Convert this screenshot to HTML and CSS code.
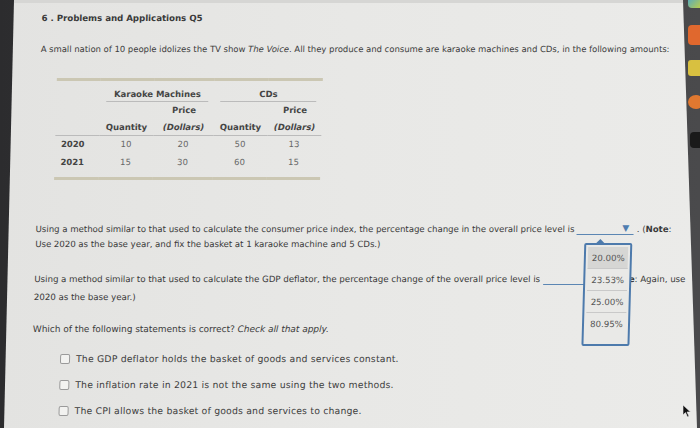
FILE: index.html
```html
<!DOCTYPE html>
<html>
<head>
<meta charset="utf-8">
<link rel="stylesheet" href="styles.css">
</head>
<body>
<div class="screen">
  <div class="page">
    <div class="content">
      <h1 class="title">6 . Problems and Applications Q5</h1>
      <p class="intro">A small nation of 10 people idolizes the TV show <i>The Voice</i>. All they produce and consume are karaoke machines and CDs, in the following amounts:</p>

      <table class="data">
        <thead>
          <tr class="grp">
            <th class="yr"></th>
            <th colspan="2"><span class="gl">Karaoke Machines</span></th>
            <th colspan="2"><span class="gl">CDs</span></th>
          </tr>
          <tr class="sub">
            <th class="yr"></th><th></th><th>Price</th><th></th><th>Price</th>
          </tr>
          <tr class="sub2">
            <th class="yr"></th><th>Quantity</th><th><i>(Dollars)</i></th><th>Quantity</th><th><i>(Dollars)</i></th>
          </tr>
        </thead>
        <tbody>
          <tr><th class="yr">2020</th><td>10</td><td>20</td><td>50</td><td>13</td></tr>
          <tr class="last"><th class="yr">2021</th><td>15</td><td>30</td><td>60</td><td>15</td></tr>
        </tbody>
      </table>

      <p class="q q1">Using a method similar to that used to calculate the consumer price index, the percentage change in the overall price level is <span class="blank b1"><span class="arrow">&#9660;</span><span class="menu"><span class="item sel">20.00%</span><span class="item">23.53%</span><span class="item">25.00%</span><span class="item">80.95%</span></span></span> . (<b>Note</b>: Use 2020 as the base year, and fix the basket at 1 karaoke machine and 5 CDs.)</p>

      <p class="q q2">Using a method similar to that used to calculate the GDP deflator, the percentage change of the overall price level is <span class="blank b2"><span class="arrow">&#9660;</span></span> . (<b>Note</b>: Again, use 2020 as the base year.)</p>

      <p class="q q3">Which of the following statements is correct? <i>Check all that apply.</i></p>

      <ul class="choices">
        <li><span class="box"></span>The GDP deflator holds the basket of goods and services constant.</li>
        <li><span class="box"></span>The inflation rate in 2021 is not the same using the two methods.</li>
        <li><span class="box"></span>The CPI allows the basket of goods and services to change.</li>
      </ul>
    </div>
    <svg class="cursor" width="10" height="14" viewBox="0 0 10 14"><path d="M1 1 L1 11 L3.5 8.6 L5.5 13 L7 12.3 L5 8 L8.5 8 Z" fill="#111" stroke="#eee" stroke-width="0.6"/></svg>
  </div>
  <div class="dock">
    <span class="ic ic1"></span>
    <span class="ic ic2"></span>
    <span class="ic ic3"></span>
    <span class="ic ic4"></span>
    <span class="ic ic5"></span>
  </div>
</div>
</body>
</html>
```
FILE: styles.css
```css
html, body {
  margin: 0;
  padding: 0;
}
body {
  width: 700px;
  height: 428px;
  overflow: hidden;
  background: linear-gradient(90deg, #2c2c2e 0%, #3d3d3f 50%, #4a4a4c 100%);
  font-family: "DejaVu Sans", Verdana, sans-serif;
}
.screen {
  position: relative;
  width: 700px;
  height: 428px;
}
.page {
  position: relative;
  width: 700px;
  height: 428px;
  background: linear-gradient(90deg, #e3e3e1 0%, #e8e8e6 50%, #ebebe9 100%);
  clip-path: polygon(14px 0, 683px 0, 697px 100%, 4px 100%);
  border-top: 3px solid #d6d6d4;
  box-sizing: border-box;
}
.content {
  padding: 8px 0 0 42px;
  transform: skewX(-1.6deg);
  transform-origin: 0 0;
  color: #3c3c3c;
  font-size: 8.45px;
}
.title {
  margin: 0;
  font-size: 8.6px;
  font-weight: bold;
  color: #3a3a3a;
  line-height: 14px;
}
.intro {
  margin: 17px 0 0 0;
  line-height: 14px;
  white-space: nowrap;
}
.data {
  margin: 22px 0 0 17px;
  border-collapse: collapse;
  border-top: 3px solid #cbc7b3;
  border-bottom: 3px solid #cbc7b3;
  font-size: 8.45px;
}
.data th, .data td {
  padding: 0;
  text-align: center;
  font-weight: bold;
  color: #444;
  height: 16px;
  width: 54px;
}
.data .yr {
  width: 44px;
  text-align: left;
  padding-left: 6px;
  box-sizing: border-box;
}
.data th:nth-child(3) { width: 60px; }
.data td { font-weight: normal; color: #666; }
.data tbody td, .data tbody th {
  height: 15px;
  padding-top: 3px;
  vertical-align: top;
  line-height: 10px;
}
.data i { font-weight: bold; }
.data .grp th { height: 21px; vertical-align: bottom; }
.data .gl {
  display: block;
  margin: 0 6px;
  border-bottom: 1px solid #bbb;
  padding-bottom: 2px;
}
.data .sub2 th { border-bottom: 1px solid #bbb; height: 17px; }
.data tr.last td, .data tr.last th { padding-bottom: 5px; }

.q {
  margin: 0;
  line-height: 15px;
  color: #3a3a3a;
}
.q1 { margin-top: 42px; width: 650px; font-size: 8.55px; }
.q2 { margin-top: 18px; line-height: 18px; width: 665px; font-size: 8.65px; }
.q3 { margin-top: 16px; font-size: 8.95px; }
.blank {
  position: relative;
  display: inline-block;
  width: 57px;
  height: 11px;
  border-bottom: 1px solid #5b86b3;
  vertical-align: -3px;
}
.arrow {
  position: absolute;
  right: 5px;
  top: 0;
  font-size: 9px;
  line-height: 10px;
  color: #4f7db0;
}
.menu {
  position: absolute;
  left: 8px;
  top: 20px;
  z-index: 2;
  width: 40px;
  padding: 2px 2px 9px;
  background: #e9e9e7;
  border: 2px solid #4d7aac;
  border-radius: 2px;
  display: flex;
  flex-direction: column;
}
.menu::before {
  content: "";
  position: absolute;
  top: -6px;
  left: 10px;
  border-left: 4px solid transparent;
  border-right: 4px solid transparent;
  border-bottom: 4px solid #4d7aac;
}
.item {
  display: block;
  height: 22px;
  line-height: 22px;
  text-align: center;
  color: #555;
  border-bottom: 1px solid #c9c9c9;
  font-size: 8.6px;
  box-sizing: border-box;
}
.item:last-child { border-bottom: none; }
.item.sel { background: #d6d6d4; }

.choices {
  list-style: none;
  margin: 14px 0 0 28px;
  padding: 0;
  display: flex;
  flex-direction: column;
  gap: 11px;
  font-size: 9.2px;
  letter-spacing: 0.25px;
}
.choices li {
  display: flex;
  align-items: center;
  gap: 6px;
  line-height: 15px;
  color: #3c3c3c;
}
.box {
  width: 8px;
  height: 8px;
  border: 1px solid #9a9a9a;
  border-radius: 2px;
  background: #f2f2f0;
}
.cursor {
  position: absolute;
  left: 682px;
  top: 401px;
}
.dock {
  position: absolute;
  top: 0;
  right: 0;
  width: 16px;
  height: 428px;
}
.ic {
  position: absolute;
  left: 4px;
  width: 16px;
  height: 16px;
  border-radius: 4px;
}
.ic1 { top: -8px; background: linear-gradient(135deg, #3aa0e0, #c8d23a); }
.ic2 { top: 25px; background: #e0682e; height: 20px; }
.ic3 { top: 60px; background: #d8c040; height: 16px; border-radius: 3px; }
.ic4 { top: 95px; background: #e07830; border-radius: 50%; height: 14px; }
.ic5 { top: 132px; background: #1a1a1a; height: 16px; left: 6px; }
```
